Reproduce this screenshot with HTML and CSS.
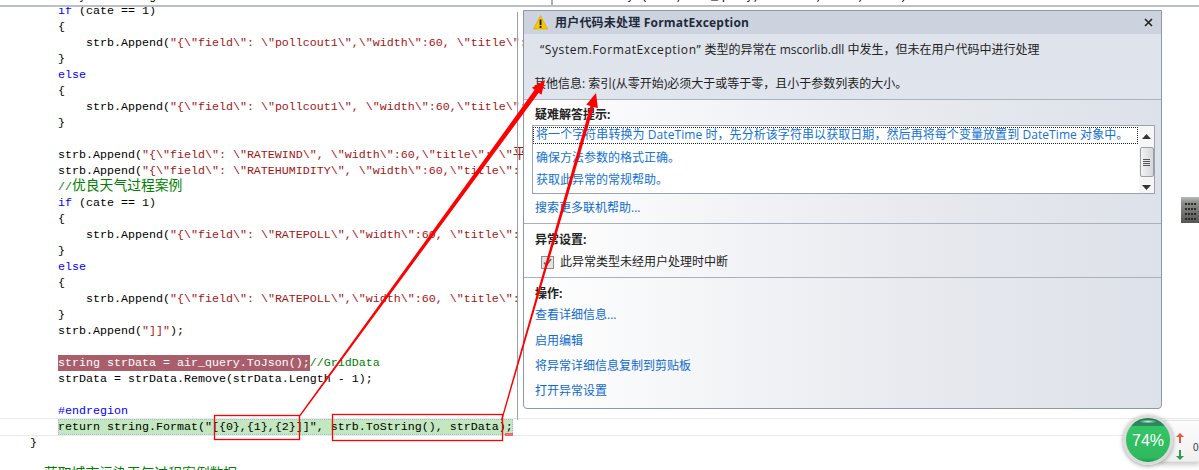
FILE: index.html
```html
<!DOCTYPE html>
<html lang="zh-CN">
<head>
<meta charset="utf-8">
<title>FormatException</title>
<link rel="stylesheet" href="styles.css">
</head>
<body>
<div class="page">
  <div class="topbar">
    <div class="top-left"><span class="clip"> key =  string</span></div>
    <div class="top-right"><span class="clip">  y (cate, air_query, strData, rate, list)</span></div>
  </div>
  <div class="code">
    <div class="ln i1"><span class="k">if</span> (cate == 1)</div>
    <div class="ln i1">{</div>
    <div class="ln i2">strb.Append(<span class="s">"{\"field\": \"pollcout1\",\"width\":60, \"title\": \"</span></div>
    <div class="ln i1">}</div>
    <div class="ln i1"><span class="k">else</span></div>
    <div class="ln i1">{</div>
    <div class="ln i2">strb.Append(<span class="s">"{\"field\": \"pollcout1\", \"width\":60,\"title\":</span></div>
    <div class="ln i1">}</div>
    <div class="ln i1"></div>
    <div class="ln i1">strb.Append(<span class="s">"{\"field\": \"RATEWIND\", \"width\":60,\"title\": \"<span class="zh">平</span></span></div>
    <div class="ln i1">strb.Append(<span class="s">"{\"field\": \"RATEHUMIDITY\", \"width\":60,\"title\":</span></div>
    <div class="ln i1"><span class="c">//<span class="zh">优良天气过程案例</span></span></div>
    <div class="ln i1"><span class="k">if</span> (cate == 1)</div>
    <div class="ln i1">{</div>
    <div class="ln i2">strb.Append(<span class="s">"{\"field\": \"RATEPOLL\",\"width\":60, \"title\":</span></div>
    <div class="ln i1">}</div>
    <div class="ln i1"><span class="k">else</span></div>
    <div class="ln i1">{</div>
    <div class="ln i2">strb.Append(<span class="s">"{\"field\": \"RATEPOLL\",\"width\":60, \"title\":</span></div>
    <div class="ln i1">}</div>
    <div class="ln i1">strb.Append(<span class="s">"]]"</span>);</div>
    <div class="ln i1"></div>
    <div class="ln i1"><span class="stopped">string strData = air_query.ToJson();</span><span class="c">//GridData</span></div>
    <div class="ln i1">strData = strData.Remove(strData.Length - 1);</div>
    <div class="ln i1"></div>
    <div class="ln i1"><span class="k">#endregion</span></div>
    <div class="ln i1 current"><span class="current-text">return string.Format("[{0},{1},{2}]]", strb.ToString(), strData);<span class="squiggle"></span></span></div>
    <div class="ln i0">}</div>
    <div class="ln i0"></div>
    <div class="ln i0"><span class="c">//<span class="zh">获取城市污染天气过程案例数据</span></span></div>
  </div>

  <div class="gutter-line"></div>

  <section class="dialog">
    <header class="dlg-title">
      <svg class="warn" width="15" height="15" viewBox="0 0 15 15"><path d="M7.5 .5 L14.6 14 H.4 Z" fill="#f7c600" stroke="#e0a800" stroke-width=".7"/><rect x="6.6" y="4.5" width="1.9" height="5.6" fill="#222"/><rect x="6.6" y="11" width="1.9" height="1.9" fill="#222"/></svg>
      <h1>用户代码未处理 FormatException</h1>
      <svg class="close" width="9" height="9" viewBox="0 0 9 9"><path d="M1 1 L8 8 M8 1 L1 8" stroke="#222" stroke-width="1.6"/></svg>
    </header>
    <div class="dlg-msg">
      <p class="msg1"><span class="wide">“System.FormatException”</span> 类型的异常在 mscorlib.dll 中发生，但未在用户代码中进行处理</p>
      <p class="msg2">其他信息: 索引(从零开始)必须大于或等于零，且小于参数列表的大小。</p>
    </div>
    <div class="dlg-sec tips">
      <h2>疑难解答提示:</h2>
      <div class="listbox">
        <ul class="items">
          <li class="focus">将一个字符串转换为 DateTime 时，先分析该字符串以获取日期，然后再将每个变量放置到 DateTime 对象中。</li>
          <li>确保方法参数的格式正确。</li>
          <li>获取此异常的常规帮助。</li>
        </ul>
        <div class="sb">
          <svg class="sb-arrow" width="9" height="5" viewBox="0 0 9 5"><path d="M4.5 0 L9 5 H0 Z" fill="#333"/></svg>
          <div class="sb-thumb"><i></i><i></i><i></i><i></i></div>
          <svg class="sb-arrow" width="9" height="5" viewBox="0 0 9 5"><path d="M0 0 H9 L4.5 5 Z" fill="#333"/></svg>
        </div>
      </div>
      <a class="link more">搜索更多联机帮助...</a>
    </div>
    <div class="dlg-sec settings">
      <h2>异常设置:</h2>
      <label class="check"><span class="box"><svg width="11" height="11" viewBox="0 0 11 11"><path d="M2 5.5 L4.5 8.5 L9 2" fill="none" stroke="#666" stroke-width="1.6"/></svg></span>此异常类型未经用户处理时中断</label>
    </div>
    <div class="dlg-sec actions">
      <h2>操作:</h2>
      <a class="link">查看详细信息...</a>
      <a class="link">启用编辑</a>
      <a class="link">将异常详细信息复制到剪贴板</a>
      <a class="link">打开异常设置</a>
    </div>
  </section>

  <svg class="overlay" width="1199" height="470" viewBox="0 0 1199 470">
    <g fill="none" stroke="#ff0000" stroke-width="1.3">
      <rect x="214.5" y="415.5" width="85" height="24"/>
      <rect x="332.5" y="414.5" width="170" height="26"/>
    </g>
    <g fill="#ff0000">
      <polygon points="299.5,415 300.5,416 538.7,92.8 541.5,94.8 545,80 531.9,87.8 534.7,89.8"/>
      <polygon points="501,420 502.2,420.4 593.8,107 597.9,108.2 596,93 586.3,104.8 590.4,106"/>
    </g>
  </svg>

  <div class="grip">
    <i></i><i></i><i></i><i></i><i></i><i></i><i></i><i></i><i></i><i></i><i></i><i></i><i></i><i></i><i></i><i></i>
  </div>

  <div class="speed">
    <div class="speed-panel">
      <svg width="8" height="30" viewBox="0 0 8 30"><path d="M4 0 L8 4 H5 V10 H3 V4 H0 Z" fill="#e2593c"/><path d="M3 17 H5 V23 H8 L4 27 L0 23 H3 Z" fill="#2f9a50"/></svg>
      <span class="zero">0</span>
    </div>
    <div class="ball"><span>74%</span></div>
  </div>
</div>
</body>
</html>
```
FILE: styles.css
```css
* { box-sizing: border-box; }
html, body { margin: 0; padding: 0; background: #fff; }
.page {
  position: relative;
  width: 1199px;
  height: 470px;
  overflow: hidden;
  background: #fff;
}
.topbar {
  position: relative;
  z-index: 1;
  display: flex;
  height: 7px;
  background: #fff;
  border-bottom: 2px solid #b9c0ca;
  font: 11.67px/0 "Liberation Mono", monospace;
  white-space: pre;
  overflow: hidden;
}
.clip { display: block; margin-top: -3px; }
.top-left { width: 553px; padding-left: 58px; border-right: 2px solid #a6adb8; }
.top-right { flex: 1; padding-left: 60px; }
.code {
  margin-top: -4px;
  font: 11.67px/16px "Liberation Mono", monospace;
  color: #000;
}
.ln { height: 16px; white-space: pre; }
.i0 { padding-left: 30px; }
.i1 { padding-left: 58px; }
.i2 { padding-left: 86px; }
.k { color: #0000ff; }
.s { color: #a31515; }
.c { color: #008000; }
.zh { font-family: "Noto Sans CJK SC", sans-serif; font-size: 13.8px; line-height: 0; }
.stopped { background: #a95f6b; color: #fff; display: inline-block; height: 16px; }
.current { box-shadow: 0 0 0 1px #ebebeb; }
.current-text {
  position: relative;
  display: inline-block;
  width: 455px;
  height: 16px;
  background: #c3e8bf;
  outline: 1px dotted #a7b8e8;
  outline-offset: -1px;
}
.squiggle {
  position: absolute;
  right: 0;
  bottom: -1px;
  width: 8px;
  height: 3px;
  background: #f0696c;
}
.gutter-line {
  position: absolute;
  left: 517px;
  top: 12px;
  bottom: 50px;
  width: 1px;
  background: #9a9fa7;
}
.dialog {
  position: absolute;
  left: 523px;
  top: 10px;
  width: 639px;
  height: 399px;
  display: flex;
  flex-direction: column;
  border: 1px solid #8c98ac;
  border-radius: 0 0 4px 4px;
  background: linear-gradient(90deg, #fff 0%, #e8eaef 60%, #dde1e9 100%);
  font: 12px/16px "Open Sans", "Noto Sans CJK SC", sans-serif;
  color: #222;
  overflow: hidden;
}
.dlg-title {
  display: flex;
  align-items: center;
  flex: none;
  height: 23px;
  padding: 0 8px 0 9px;
  background: #ccd3df;
}
.warn { flex: none; }
.dlg-title h1 {
  flex: 1;
  margin: 0 0 0 7px;
  font-size: 12px;
  font-weight: 700;
  letter-spacing: .2px;
  color: #1e2a3c;
}
.close { flex: none; }
.dlg-msg {
  flex: none;
  height: 66px;
  padding: 8px 10px 0;
  background: linear-gradient(180deg, #dfe3ec, #e0e4ec);
  border-bottom: 1px solid #a9b1bf;
}
.dlg-msg p { margin: 0; }
.msg1 { padding-left: 6px; }
.wide { letter-spacing: .6px; }
.dlg-msg .msg2 { margin-top: 18px; }
.dlg-sec { flex: none; padding: 7px 10px 0 11px; border-bottom: 1px solid #a9b1bf; }
.dlg-sec h2 { margin: 0; font-size: 12px; font-weight: 700; line-height: 16px; color: #222; }
.tips { height: 124px; }
.listbox {
  display: flex;
  height: 69px;
  margin: 2px 0 0 -3px;
  width: 623px;
  border: 1px solid #9aa3b2;
  background: #fff;
}
.items { flex: 1; margin: 0; padding: 1px 0 0; list-style: none; color: #1272d6; }
.items li { height: 22px; line-height: 16px; padding-left: 3px; white-space: nowrap; }
.items li.focus { height: 17px; margin-bottom: 6px; outline: 1px dotted #222; outline-offset: -1px; line-height: 15px; margin-right: 1px; letter-spacing: .07px; }
.sb {
  flex: none;
  width: 15px;
  display: flex;
  flex-direction: column;
  align-items: center;
  padding-top: 8px;
  gap: 8px;
  background: #f6f6f7;
}
.sb-thumb {
  width: 14px;
  height: 30px;
  display: flex;
  flex-direction: column;
  justify-content: center;
  align-items: center;
  gap: 1px;
  border: 1px solid #9c9fa6;
  border-radius: 2px;
  background: linear-gradient(90deg, #f3f3f4, #d5d6da);
}
.sb-thumb i { width: 7px; height: 1px; background: #555; }
.link { display: block; color: #0f6bcf; }
.more { margin-top: 6px; }
.settings { height: 54px; padding-top: 8px; }
.check { display: flex; align-items: center; margin-top: 6px; padding-left: 6px; }
.box {
  width: 13px;
  height: 13px;
  margin-right: 6px;
  display: flex;
  align-items: center;
  justify-content: center;
  border: 1px solid #8d8d8d;
  background: #e4e4e4;
}
.actions { flex: 1; border-bottom: 0; padding-top: 8px; }
.actions .link { margin-top: 9px; }
.actions h2 + .link { margin-top: 5px; }
.actions .link:nth-of-type(2) { margin-top: 10px; }
.overlay { position: absolute; left: 0; top: 0; pointer-events: none; }
.grip {
  position: absolute;
  left: 1181px;
  top: 197px;
  width: 18px;
  height: 26px;
  padding: 6px 3px 0 4px;
  display: grid;
  grid-template-columns: repeat(4, 2px);
  grid-auto-rows: 2px;
  gap: 3px 1px;
  background: linear-gradient(180deg, #b9bab6 0, #8f918d 20%, #555651 100%);
}
.grip i { background: #2a2a2a; }
.speed {
  position: absolute;
  left: 1123px;
  top: 415px;
  width: 76px;
  height: 50px;
}
.speed-panel {
  position: absolute;
  left: 36px;
  top: 5px;
  width: 41px;
  height: 42px;
  padding: 12px 0 0 16px;
  display: flex;
  gap: 9px;
  border: 1px solid #e4e4e4;
  background: linear-gradient(180deg, #fcfcfc, #f0f0f0);
  box-shadow: 0 3px 5px rgba(0, 0, 0, .2);
  font: 10px/30px "Liberation Sans", sans-serif;
}
.zero { color: #333; }
.ball {
  position: absolute;
  left: 0;
  top: 0;
  width: 50px;
  height: 50px;
  display: flex;
  align-items: center;
  justify-content: center;
  border: 3px solid #d8dcd9;
  border-radius: 50%;
  background: radial-gradient(ellipse 9px 2px at 50% 8%, #cfe8da 0, rgba(207, 232, 218, 0) 100%),
    linear-gradient(180deg, #1e7a55 0, #2e8c63 18%, #34c466 19%, #2fb95d 90%, #1f9a4d 100%);
  box-shadow: 0 1px 4px rgba(0, 0, 0, .4);
  color: #fff;
  font: 16px/1 "Liberation Sans", sans-serif;
}
.ball span { position: relative; top: 1px; }
```
